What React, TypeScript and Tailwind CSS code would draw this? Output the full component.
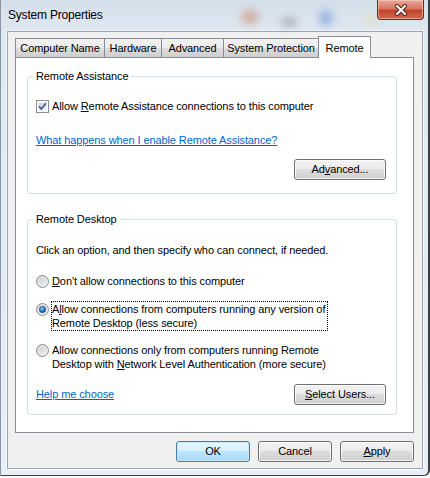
import type { ReactNode } from 'react';

const font = "font-['Liberation_Sans',Arial,sans-serif]";

function Button({ children, isDefault = false, className = '' }: { children: ReactNode; isDefault?: boolean; className?: string }) {
  return (
    <button
      className={
        'flex items-center justify-center h-[21px] rounded-[3px] border text-[11px] tracking-[-0.1px] leading-none text-black ' +
        (isDefault
          ? 'border-[#3c7fb1] bg-[linear-gradient(180deg,#eaf6fd_0%,#d9f0fc_49%,#bee6fd_50%,#a7d9f5_100%)] shadow-[inset_0_0_0_1px_#c9e9fa] '
          : 'border-[#707070] bg-[linear-gradient(180deg,#f2f2f2_0%,#ebebeb_49%,#dddddd_50%,#cfcfcf_100%)] shadow-[inset_0_0_0_1px_rgba(255,255,255,0.75)] ') +
        className
      }
    >
      {children}
    </button>
  );
}

function Checkbox() {
  return (
    <svg width="13" height="13" viewBox="0 0 13 13" className="shrink-0">
      <defs>
        <linearGradient id="cb" x1="0" y1="0" x2="1" y2="1">
          <stop offset="0" stopColor="#cbcfd5" />
          <stop offset="1" stopColor="#f6f6f6" />
        </linearGradient>
      </defs>
      <rect x="0.5" y="0.5" width="12" height="12" fill="#fff" stroke="#8e8f8f" />
      <rect x="2.5" y="2.5" width="8" height="8" fill="url(#cb)" stroke="#f4f4f4" strokeWidth="0.5" />
      <path d="M3 6.2 L5.3 9 L10 3.2" fill="none" stroke="#4a5f97" strokeWidth="1.8" strokeLinejoin="round" />
    </svg>
  );
}

function Radio({ checked = false }: { checked?: boolean }) {
  return (
    <svg width="13" height="13" viewBox="0 0 13 13" className="shrink-0">
      <defs>
        <linearGradient id="rb" x1="0" y1="0" x2="1" y2="1">
          <stop offset="0" stopColor="#c5c9cf" />
          <stop offset="1" stopColor="#f4f4f4" />
        </linearGradient>
        <radialGradient id="rd" cx="0.4" cy="0.35" r="0.7">
          <stop offset="0" stopColor="#8fd0f8" />
          <stop offset="0.6" stopColor="#2a78c2" />
          <stop offset="1" stopColor="#123f76" />
        </radialGradient>
      </defs>
      <circle cx="6.5" cy="6.5" r="6" fill="url(#rb)" stroke="#8e8f8f" />
      <circle cx="6.5" cy="6.5" r="4.3" fill="none" stroke="#f2f2f2" strokeWidth="0.8" />
      {checked && <circle cx="6.5" cy="6.5" r="3.2" fill="url(#rd)" stroke="#1f4f86" strokeWidth="0.6" />}
    </svg>
  );
}

function GroupBox({ title, className = '', children }: { title: string; className?: string; children: ReactNode }) {
  return (
    <div className={'relative ml-[11px] w-[370px] rounded-[3px] border border-[#d5dfe5] ' + className}>
      <span className="absolute -top-[8px] left-[5px] bg-white px-[3px] leading-[15px]">{title}</span>
      {children}
    </div>
  );
}

const tabs = ['Computer Name', 'Hardware', 'Advanced', 'System Protection'];
const tabWidths = ['w-[90px]', 'w-[58px]', 'w-[63px]', 'w-[96px]'];

export default function App() {
  return (
    <div className={`${font} relative h-[478px] w-[430px] overflow-hidden bg-white text-[11px] tracking-[-0.1px] text-black`}>
      <div className="relative flex h-[476px] w-[430px] flex-col rounded-br-[6px] border-b border-l border-r-2 border-[#3a3f45] border-l-[#8a96a3] bg-[linear-gradient(180deg,#d4dfea_0%,#dfe8f1_30px,#e9eff5_100%)]">
        {/* blurred desktop behind the glass */}
        <div className="absolute left-[240px] top-[10px] h-[14px] w-[18px] rounded-full bg-[#c98a6a] opacity-60 blur-[4px]" />
        <div className="absolute left-[280px] top-[18px] h-[8px] w-[16px] rounded-full bg-[#6b6f78] opacity-50 blur-[4px]" />
        <div className="absolute left-[318px] top-[10px] h-[16px] w-[14px] rounded-full bg-[#6f8fd8] opacity-60 blur-[4px]" />
        <div className="absolute left-[362px] top-[14px] h-[12px] w-[14px] rounded-full bg-[#e6dcc0] opacity-70 blur-[4px]" />

        <div className="relative flex h-[31px] items-start justify-between">
          <span className="ml-[7px] mt-[8px] text-[12px] leading-[15px] tracking-[-0.2px]">System Properties</span>
          <div className="mr-[4px] flex h-[20px] w-[47px] items-center justify-center rounded-b-[4px] border border-t-0 border-[#6b2a20] bg-[linear-gradient(180deg,#e9a99b_0%,#d87662_45%,#c0452e_55%,#cf6a4c_100%)] shadow-[inset_0_0_0_1px_rgba(255,220,210,0.5)]">
            <svg width="14" height="12" viewBox="0 0 14 12">
              <path d="M3 2 L11 10 M11 2 L3 10" stroke="#4a1f18" strokeWidth="4" strokeLinecap="round" />
              <path d="M3 2 L11 10 M11 2 L3 10" stroke="#ffffff" strokeWidth="2.2" strokeLinecap="round" />
            </svg>
          </div>
        </div>

        <div className="ml-[6px] mr-[5px] flex h-[438px] flex-col border border-[#9aa5b1] bg-[#f0f0f0] shadow-[0_0_0_1px_rgba(255,255,255,0.6)]">
          {/* tabs */}
          <div className="ml-[7px] mt-[5px] flex h-[20px] items-end">
            {tabs.map((t, i) => (
              <div
                key={t}
                className={`${tabWidths[i]} flex h-[19px] items-center justify-center whitespace-nowrap border border-b-0 border-[#898c95] bg-[linear-gradient(180deg,#f2f2f2_0%,#ebebeb_50%,#dddddd_51%,#cfcfcf_100%)] ${i > 0 ? '-ml-px' : ''}`}
              >
                {t}
              </div>
            ))}
            <div className="relative z-10 -mb-px -ml-px flex h-[22px] w-[53px] items-start justify-center border border-b-0 border-[#898c95] bg-white pt-[3px]">
              Remote
            </div>
          </div>

          {/* panel */}
          <div className="ml-[7px] h-[376px] w-[399px] border border-[#898c95] bg-white">
            <GroupBox title="Remote Assistance" className="mt-[18px] h-[118px]">
              <div className="ml-[8px] mt-[23px] flex h-[13px] items-center gap-[3px] leading-[15px]">
                <Checkbox />
                <span>
                  Allow <span className="underline">R</span>emote Assistance connections to this computer
                </span>
              </div>
              <div className="ml-[8px] mt-[20px] leading-[15px] text-[#0066cc] underline">
                What happens when I enable Remote Assistance?
              </div>
              <div className="mr-[10px] mt-[11px] flex justify-end">
                <Button className="w-[92px]">
                  Ad<span className="underline">v</span>anced...
                </Button>
              </div>
            </GroupBox>

            <GroupBox title="Remote Desktop" className="mt-[25px] h-[196px]">
              <div className="ml-[8px] mt-[23px] leading-[15px]">Click an option, and then specify who can connect, if needed.</div>
              <div className="ml-[8px] mt-[16px] flex items-center gap-[3px] leading-[14px]">
                <Radio />
                <span>
                  <span className="underline">D</span>on't allow connections to this computer
                </span>
              </div>
              <div className="ml-[8px] mt-[13px] flex items-start gap-[2px] leading-[14px]">
                <div className="mt-[2px]">
                  <Radio checked />
                </div>
                <span className="border border-dotted border-black pr-[2px]">
                  A<span className="underline">l</span>low connections from computers running any version of
                  <br />
                  Remote Desktop (less secure)
                </span>
              </div>
              <div className="ml-[8px] mt-[12px] flex items-start gap-[3px] leading-[14px]">
                <div className="mt-[1px]">
                  <Radio />
                </div>
                <span>
                  Allow connections only from computers running Remote
                  <br />
                  Desktop with <span className="underline">N</span>etwork Level Authentication (more secure)
                </span>
              </div>
              <div className="ml-[8px] mr-[10px] mt-[13px] flex items-center justify-between">
                <span className="leading-[15px] text-[#0066cc] underline">Help me choose</span>
                <Button className="w-[92px]">
                  <span className="underline">S</span>elect Users...
                </Button>
              </div>
            </GroupBox>
          </div>

          {/* dialog buttons */}
          <div className="mr-[8px] mt-[8px] flex justify-end gap-[8px]">
            <Button isDefault className="w-[74px]">
              OK
            </Button>
            <Button className="w-[74px]">Cancel</Button>
            <Button className="w-[74px]">
              <span className="underline">A</span>pply
            </Button>
          </div>
        </div>
      </div>
    </div>
  );
}
